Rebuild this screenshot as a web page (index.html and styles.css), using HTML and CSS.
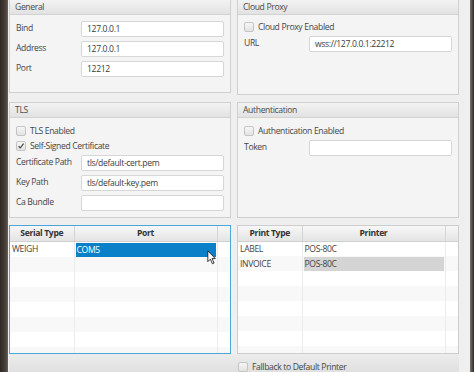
FILE: index.html
```html
<!DOCTYPE html>
<html>
<head>
<meta charset="utf-8">
<link rel="stylesheet" href="styles.css">
</head>
<body>
<div class="screen">
  <div class="edge-left"></div>
  <main class="app">
    <div class="grid">
      <section class="panel general">
        <header class="panel-head">General</header>
        <div class="form">
          <div class="row"><label>Bind</label><div class="input">127.0.0.1</div></div>
          <div class="row"><label>Address</label><div class="input">127.0.0.1</div></div>
          <div class="row"><label>Port</label><div class="input">12212</div></div>
        </div>
      </section>
      <section class="panel cloud">
        <header class="panel-head">Cloud Proxy</header>
        <div class="form">
          <div class="check"><span class="box"></span>Cloud Proxy Enabled</div>
          <div class="row"><label>URL</label><div class="input">wss://127.0.0.1:22212</div></div>
        </div>
      </section>
      <section class="panel tls">
        <header class="panel-head">TLS</header>
        <div class="form">
          <div class="check"><span class="box"></span>TLS Enabled</div>
          <div class="check"><span class="box checked"><svg viewBox="0 0 10 10" width="10" height="10"><path d="M2 5.2 L4 7.5 L8.2 2" fill="none" stroke="#333" stroke-width="1.3"/></svg></span>Self-Signed Certificate</div>
          <div class="row"><label>Certificate Path</label><div class="input">tls/default-cert.pem</div></div>
          <div class="row"><label>Key Path</label><div class="input">tls/default-key.pem</div></div>
          <div class="row"><label>Ca Bundle</label><div class="input"></div></div>
        </div>
      </section>
      <section class="panel auth">
        <header class="panel-head">Authentication</header>
        <div class="form">
          <div class="check"><span class="box"></span>Authentication Enabled</div>
          <div class="row"><label>Token</label><div class="input"></div></div>
        </div>
      </section>
      <div class="table-wrap focused">
        <table class="table">
          <colgroup><col class="c1"><col class="c2"><col></colgroup>
          <thead><tr><th>Serial Type</th><th>Port</th><th></th></tr></thead>
          <tbody>
            <tr><td>WEIGH</td><td class="sel-blue"><span>COM5</span></td><td></td></tr>
            <tr class="alt"><td></td><td></td><td></td></tr>
            <tr><td></td><td></td><td></td></tr>
            <tr class="alt"><td></td><td></td><td></td></tr>
            <tr><td></td><td></td><td></td></tr>
            <tr class="alt"><td></td><td></td><td></td></tr>
            <tr><td></td><td></td><td></td></tr>
            <tr class="alt"><td></td><td></td><td></td></tr>
          </tbody>
        </table>
        <svg class="cursor" viewBox="0 0 12 18" width="10" height="15"><path d="M1 1 L1 14 L4 11 L6.5 16.5 L8.5 15.6 L6 10.3 L10 10.3 Z" fill="#fff" stroke="#111" stroke-width="1" stroke-linejoin="round"/></svg>
      </div>
      <div class="table-wrap">
        <table class="table">
          <colgroup><col class="c1"><col class="c2"><col></colgroup>
          <thead><tr><th>Print Type</th><th>Printer</th><th></th></tr></thead>
          <tbody>
            <tr><td>LABEL</td><td>POS-80C</td><td></td></tr>
            <tr class="alt"><td>INVOICE</td><td class="sel-grey"><span>POS-80C</span></td><td></td></tr>
            <tr><td></td><td></td><td></td></tr>
            <tr class="alt"><td></td><td></td><td></td></tr>
            <tr><td></td><td></td><td></td></tr>
            <tr class="alt"><td></td><td></td><td></td></tr>
            <tr><td></td><td></td><td></td></tr>
            <tr class="alt"><td></td><td></td><td></td></tr>
          </tbody>
        </table>
      </div>
    </div>
    <div class="footer">
      <div></div>
      <div class="check fallback"><span class="box"></span>Fallback to Default Printer</div>
    </div>
  </main>
  <div class="edge-right"></div>
</div>
</body>
</html>
```
FILE: styles.css
```css
* { box-sizing: border-box; }
html, body { margin: 0; padding: 0; }
body {
  font-family: "Open Sans", "Noto Sans", sans-serif;
  font-size: 8.6px;
  letter-spacing: -0.35px;
  color: #444;
  background: #2f2925;
}
.screen {
  display: flex;
  width: 474px;
  height: 372px;
  overflow: hidden;
}
.edge-left {
  width: 8px;
  flex: none;
  background: linear-gradient(90deg, #2e2723 0, #4a413b 70%, #6b625c 100%);
}
.edge-right {
  width: 4px;
  flex: none;
  background: linear-gradient(90deg, #7a7470, #2e2925);
}
.app {
  flex: 1;
  background: #efefef;
  padding: 0 11px 0 1px;
  display: flex;
  flex-direction: column;
}
.grid {
  display: grid;
  grid-template-columns: 222px 222px;
  grid-template-rows: 96px 116px 129px;
  column-gap: 6px;
  row-gap: 7px;
  margin-top: -1px;
}
.panel {
  background: #f4f4f4;
  border: 1px solid #cfcfcf;
  display: flex;
  flex-direction: column;
}
.general { height: 94px; align-self: start; }
.panel-head {
  height: 15px;
  line-height: 14px;
  padding-left: 5px;
  background: linear-gradient(#f3f3f3, #e2e2e2);
  border-bottom: 1px solid #d2d2d2;
  color: #4a4a4a;
}
.form {
  padding: 6px 6px 0 6px;
  display: flex;
  flex-direction: column;
  gap: 4px;
}
.row {
  display: flex;
  align-items: center;
}
.row label {
  width: 65px;
  flex: none;
  align-self: flex-start;
  padding-top: 1px;
}
.input {
  flex: 1;
  height: 16px;
  line-height: 14px;
  background: #fff;
  border: 1px solid #d6d6d6;
  border-radius: 2px;
  padding-left: 5px;
  color: #3c3c3c;
}
.check {
  display: flex;
  align-items: center;
  gap: 4px;
  height: 10px;
}
.tls .form, .auth .form { padding-top: 8px; }
.tls .check + .check { margin-top: 1px; }
.cloud .form { padding-top: 7px; }
.box {
  width: 10px;
  height: 10px;
  flex: none;
  border: 1px solid #c4c4c4;
  border-radius: 2px;
  background: linear-gradient(#f6f6f6, #e2e2e2);
  display: flex;
  align-items: center;
  justify-content: center;
}
.box svg { display: block; }
.table-wrap {
  position: relative;
  background: #fff;
  border: 1px solid #cdcdcd;
  overflow: hidden;
}
.table-wrap.focused {
  border-color: #4aa6d6;
}
.table {
  width: 100%;
  border-collapse: collapse;
  table-layout: fixed;
}
.table col.c1 { width: 64px; }
.table col.c2 { width: 143px; }
.table th {
  height: 15px;
  font-weight: bold;
  color: #333;
  background: linear-gradient(#f7f7f7, #e4e4e4);
  border-right: 1px solid #d4d4d4;
  border-bottom: 1px solid #d0d0d0;
  padding: 0;
  text-align: center;
}
.table th:last-child { border-right: none; }
.table td {
  height: 15px;
  padding: 0 0 0 2px;
  border-right: 1px solid #ececec;
  white-space: nowrap;
  color: #444;
}
.table td:last-child { border-right: none; }
.table tr.alt td { background: #f8f8f8; }
.table td.sel-blue, .table td.sel-grey { padding: 1px 1px 0 1px; }
.table td.sel-blue span, .table td.sel-grey span {
  display: block;
  height: 14px;
  line-height: 14px;
  padding-left: 1px;
}
.table td.sel-blue span { background: #0a80c8; color: #fff; }
.table td.sel-grey span { background: #d4d4d4; }
.cursor {
  position: absolute;
  left: 197px;
  top: 24px;
}
.footer {
  display: grid;
  grid-template-columns: 222px 222px;
  column-gap: 6px;
  padding-top: 8px;
  flex: 1;
  background: linear-gradient(#ececec, #e0e0e0);
}
.fallback { padding-left: 1px; }
```
